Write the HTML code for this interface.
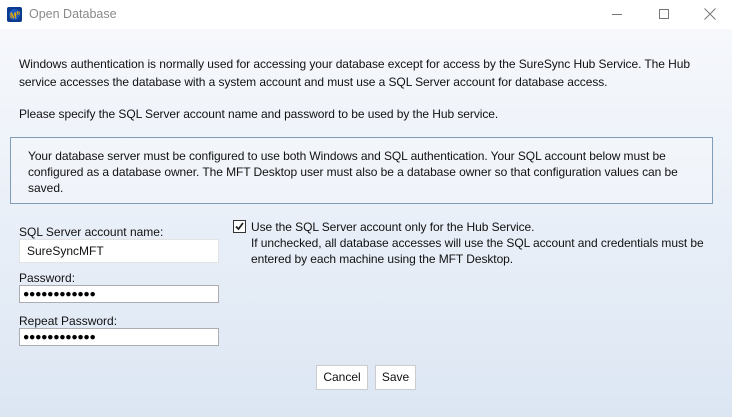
<!DOCTYPE html>
<html><head><meta charset="utf-8"><style>
*{margin:0;padding:0;box-sizing:border-box}
body{width:732px;height:417px;overflow:hidden;font-family:"Liberation Sans",sans-serif;font-size:12px;color:#111;position:relative;background:#fff}
.t{position:absolute;white-space:nowrap;line-height:16px}
#body{position:absolute;left:0;top:29px;width:732px;height:388px;background:linear-gradient(#f6f8fc,#dce6f3)}
.in{position:absolute;left:19px;width:200px;background:#fff;border:1px solid #abadb3}
.dots{position:absolute;left:3px;top:0px;font-size:10.5px;letter-spacing:-0.3px;color:#000}
.btn{position:absolute;top:365px;height:25px;background:#fff;border:1px solid #ccc;text-align:center;line-height:23px}
</style></head><body>
<div style="position:absolute;left:7px;top:7px;width:15px;height:15px;background:#0b3a8f;border-radius:2px"><div style="position:absolute;left:2px;top:2px;width:11px;height:11px;border-radius:50%;background:#1d58c0"></div><div style="position:absolute;left:3px;top:3px;font-size:8px;font-weight:bold;color:#f5b400;line-height:9px">M<sup style="font-size:5px">ft</sup></div></div>
<div class="t" style="left:29px;top:6px;color:#8a8a8a;font-size:12.5px">Open Database</div>
<div style="position:absolute;left:612px;top:14px;width:10px;height:1px;background:#777"></div>
<div style="position:absolute;left:659px;top:9px;width:10px;height:10px;border:1px solid #777"></div>
<svg style="position:absolute;left:704px;top:8px" width="12" height="12"><path d="M0.5 0.5L11.5 11.5M11.5 0.5L0.5 11.5" stroke="#777" stroke-width="1"/></svg>
<div id="body"></div>
<div class="t" style="left:19px;top:56px;letter-spacing:-0.07px">Windows authentication is normally used for accessing your database except for access by the SureSync Hub Service. The Hub</div>
<div class="t" style="left:19px;top:74px;letter-spacing:-0.07px">service accesses the database with a system account and must use a SQL Server account for database access.</div>
<div class="t" style="left:19px;top:106px;letter-spacing:-0.07px">Please specify the SQL Server account name and password to be used by the Hub service.</div>
<div style="position:absolute;left:10px;top:137px;width:703px;height:67px;border:1px solid #7f9db9;background:rgba(255,255,255,0.25)"></div>
<div class="t" style="left:28px;top:148px;letter-spacing:-0.07px">Your database server must be configured to use both Windows and SQL authentication. Your SQL account below must be</div>
<div class="t" style="left:28px;top:164px;letter-spacing:-0.07px">configured as a database owner. The MFT Desktop user must also be a database owner so that configuration values can be</div>
<div class="t" style="left:28px;top:180px">saved.</div>
<div class="t" style="left:19px;top:224px">SQL Server account name:</div>
<div class="in" style="top:239px;height:24px;border-color:#e3e3e3"><span class="t" style="left:7px;top:3px">SureSyncMFT</span></div>
<div class="t" style="left:19px;top:270px">Password:</div>
<div class="in" style="top:285px;height:18px"><span class="dots t">●●●●●●●●●●●●</span></div>
<div class="t" style="left:19px;top:313px">Repeat Password:</div>
<div class="in" style="top:328px;height:18px"><span class="dots t">●●●●●●●●●●●●</span></div>
<div style="position:absolute;left:233px;top:220px;width:13px;height:13px;border:1px solid #333;background:#fff"></div>
<svg style="position:absolute;left:233px;top:220px" width="13" height="13"><path d="M3 6.5L5.5 9L10 3" stroke="#222" stroke-width="1.8" fill="none"/></svg>
<div class="t" style="left:251px;top:219px;letter-spacing:-0.07px">Use the SQL Server account only for the Hub Service.</div>
<div class="t" style="left:251px;top:235px;letter-spacing:-0.07px">If unchecked, all database accesses will use the SQL account and credentials must be</div>
<div class="t" style="left:251px;top:251px;letter-spacing:-0.07px">entered by each machine using the MFT Desktop.</div>
<div class="btn" style="left:316px;width:52px">Cancel</div>
<div class="btn" style="left:375px;width:41px">Save</div>
</body></html>
